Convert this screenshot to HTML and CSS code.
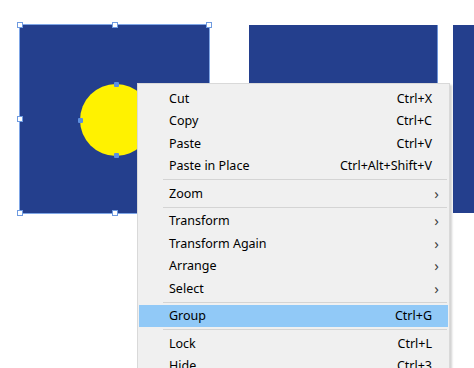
FILE: index.html
```html
<!DOCTYPE html>
<html lang="en">

<head>
    <meta charset="UTF-8">
    <title>Canvas</title>
    <link rel="stylesheet" href="styles.css">
</head>

<body>
    <div class="canvas">
        <!-- selected square with circle -->
        <div class="shape square sq-1 selected">
            <span class="handle h-tl"></span>
            <span class="handle h-tc"></span>
            <span class="handle h-tr"></span>
            <span class="handle h-ml"></span>
            <span class="handle h-bl"></span>
            <span class="handle h-bc"></span>
        </div>
        <div class="shape circle">
            <span class="dot d-t"></span>
            <span class="dot d-l"></span>
            <span class="dot d-b"></span>
        </div>
        <div class="shape square sq-2"></div>
        <div class="shape square sq-3"></div>

        <!-- context menu -->
        <div class="context-menu">
            <div class="menu-item"><span class="label">Cut</span><span class="key">Ctrl+X</span></div>
            <div class="menu-item"><span class="label">Copy</span><span class="key">Ctrl+C</span></div>
            <div class="menu-item"><span class="label">Paste</span><span class="key">Ctrl+V</span></div>
            <div class="menu-item"><span class="label">Paste in Place</span><span class="key">Ctrl+Alt+Shift+V</span></div>
            <div class="separator"></div>
            <div class="menu-item sub"><span class="label">Zoom</span><span class="arrow">&rsaquo;</span></div>
            <div class="separator"></div>
            <div class="menu-item sub"><span class="label">Transform</span><span class="arrow">&rsaquo;</span></div>
            <div class="menu-item sub"><span class="label">Transform Again</span><span class="arrow">&rsaquo;</span></div>
            <div class="menu-item sub"><span class="label">Arrange</span><span class="arrow">&rsaquo;</span></div>
            <div class="menu-item sub"><span class="label">Select</span><span class="arrow">&rsaquo;</span></div>
            <div class="separator"></div>
            <div class="menu-item active"><span class="label">Group</span><span class="key">Ctrl+G</span></div>
            <div class="separator"></div>
            <div class="menu-item"><span class="label">Lock</span><span class="key">Ctrl+L</span></div>
            <div class="menu-item"><span class="label">Hide</span><span class="key">Ctrl+3</span></div>
        </div>
    </div>
</body>

</html>
```

FILE: styles.css
```css
body {
    margin: 0;
    background-color: #fff;
    font-family: "Noto Sans", "Open Sans", sans-serif;
    overflow: hidden;
}

.canvas {
    position: relative;
    width: 474px;
    height: 368px;
    overflow: hidden;
}

.shape {
    position: absolute;
}

.square {
    background-color: #243f8d;
    top: 25px;
    height: 188px;
}

.sq-1 {
    left: 20px;
    width: 189px;
    box-shadow: 0 0 0 1px #7fa6e6;
}

.sq-2 {
    left: 249px;
    width: 188px;
    box-shadow: 1px 0 0 0 #6f95d8;
}

.sq-3 {
    left: 453px;
    width: 40px;
}

.handle {
    position: absolute;
    width: 6px;
    height: 6px;
    background-color: #fff;
    border: 1px solid #6f9be0;
    box-sizing: border-box;
}

.h-tl { left: -3px; top: -3px; }
.h-tc { left: 92px; top: -3px; }
.h-tr { right: -3px; top: -3px; }
.h-ml { left: -3px; top: 91px; }
.h-bl { left: -3px; bottom: -3px; }
.h-bc { left: 92px; bottom: -3px; }

.circle {
    left: 80px;
    top: 84px;
    width: 72px;
    height: 72px;
    border-radius: 50%;
    background-color: #fff200;
}

.dot {
    position: absolute;
    width: 5px;
    height: 5px;
    background-color: #5b8fe0;
    border-radius: 1px;
}

.d-t { left: 34px; top: -2px; }
.d-l { left: -2px; top: 34px; }
.d-b { left: 34px; bottom: -2px; }

.context-menu {
    position: absolute;
    left: 137px;
    top: 83px;
    width: 309px;
    padding: 3px 1px 0;
    background-color: #f0f0f0;
    border: 1px solid #d9d9d9;
    box-shadow: 2px 2px 2px rgba(0, 0, 0, 0.18);
    display: flex;
    flex-direction: column;
}

.menu-item {
    flex: none;
    height: 22.5px;
    display: flex;
    align-items: center;
    justify-content: space-between;
    padding: 0 16px 0 30px;
    font-size: 12.5px;
    color: #000;
}

.menu-item.sub {
    padding-right: 9px;
}

.menu-item.active {
    background-color: #91c9f7;
}

.arrow {
    font-size: 15px;
    color: #444;
    line-height: 1;
}

.separator {
    flex: none;
    height: 1px;
    margin: 2px 1px 2px 24px;
    background-color: #d4d4d4;
}
```
